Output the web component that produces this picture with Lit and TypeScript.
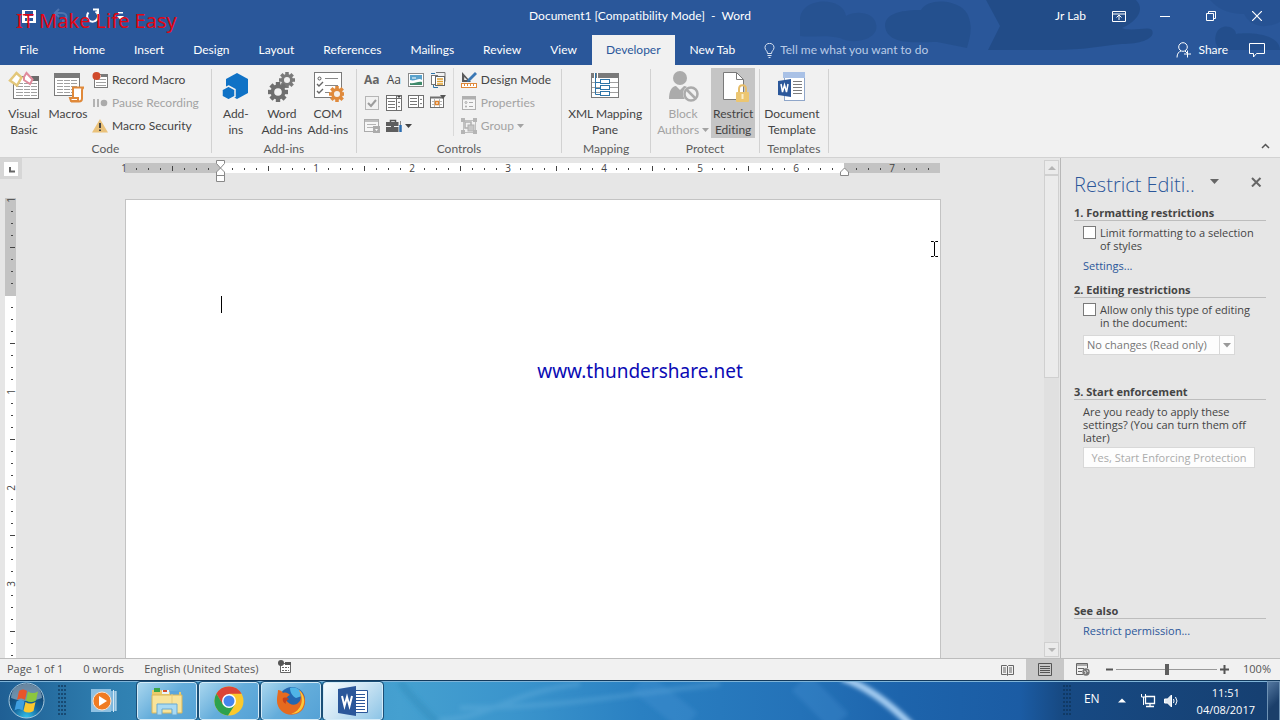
import { LitElement, html, svg, css } from "lit";
import { customElement, property } from "lit/decorators.js";
import { classMap } from "lit/directives/class-map.js";

const gear = (cx: number, cy: number, r: number, color: string, hole: string) => svg`
  <g fill=${color}>
    ${[0, 45, 90, 135].map(
      (a) => svg`<rect x=${cx - r * 0.22} y=${cy - r} width=${r * 0.44} height=${r * 2} transform=${`rotate(${a} ${cx} ${cy})`}/>`
    )}
    <circle cx=${cx} cy=${cy} r=${r * 0.74}/>
    <circle cx=${cx} cy=${cy} r=${r * 0.38} fill=${hole}/>
  </g>`;

const sheetLines = (x1: number, x2: number, ys: number[], color = "#a0a0a0") =>
  ys.map((y) => svg`<path d=${`M${x1} ${y}H${x2}`} stroke=${color}/>`);

const big = (body: unknown) => html`<svg class="ico32" width="32" height="32" viewBox="0 0 32 32" fill="none" aria-hidden="true">${body}</svg>`;
const small = (body: unknown) => html`<svg width="16" height="16" viewBox="0 0 16 16" fill="none" aria-hidden="true">${body}</svg>`;

const icons = {
  visualBasic: big(svg`
    <rect x="5.500" y="5.500" width="25" height="22" fill="#fff" stroke="#7a7a7a"/>
    <rect x="24" y="5" width="7" height="5" fill="#6b6b6b"/>
    ${sheetLines(8, 29, [12.5, 15.5, 18.5, 21.5, 24.5])}
    <path d="M15.500 11V27M22.500 11V27" stroke="#fff"/>
    <path d="M2 9.500L8.500 2l5 4.500-4.500 8z" fill="#fff" stroke="#e3c77a" stroke-width="2.500"/>
    <path d="M16 6l2.500-4 6 6.500-2.500 4.500-6-4z" fill="#fff" stroke="#e08a9c" stroke-width="2"/>`),
  macros: big(svg`
    <rect x="2.500" y="2.500" width="25" height="22" fill="#fff" stroke="#7a7a7a"/>
    <rect x="2" y="2" width="26" height="5" fill="#7a7a7a"/>
    ${sheetLines(5, 25, [9.5, 12.5, 15.5, 18.5, 21.5])}
    <path d="M11.500 9V23M18.500 9V23" stroke="#fff"/>
    <path d="M21 16.500h11c-2 0-2 2-2 3v8c0 2-1 3-3 3h-8c2 0 2-2 2-3z" fill="#fff" stroke="#e0893a" stroke-width="2"/>
    <path d="M18 27h8v3h-7z" fill="#fff" stroke="#e0893a" stroke-width="2"/>`),
  addins: big(svg`
    <path d="M17 2l11 6v14l-11 6-11-6V8z" fill="#0f72c6"/>
    <path d="M8.500 15l6.500 3.500v7L8.500 29 2 25.500v-7z" fill="#0f72c6" stroke="#f1f1f1" stroke-width="1.500"/>`),
  wordAddins: big(svg`${gear(21, 9, 8, "#7a7a7a", "#f1f1f1")}${gear(12, 21, 10, "#6f6f6f", "#f1f1f1")}`),
  comAddins: big(svg`
    <rect x="2.500" y="1.500" width="27" height="25" fill="#fff" stroke="#7a7a7a"/>
    <circle cx="7.500" cy="7.500" r="1.500" stroke="#555"/>
    <path d="M5 13l2 2 4-4M5 20l2 2 4-4" stroke="#666" stroke-width="1.400"/>
    <path d="M13 7.500h13M13 14.500h13M13 21.500h5" stroke="#888"/>
    ${gear(25, 23, 8, "#e08a3c", "#f6f1ec")}`),
  xml: big(svg`
    <rect x="2.500" y="2.500" width="27" height="24" fill="#fff" stroke="#7a7a7a"/>
    <rect x="2" y="2" width="28" height="5" fill="#7a7a7a"/>
    ${sheetLines(3, 29, [11.5, 16.5, 21.5])}
    <path d="M6.500 2v21.500h5M6.500 11.500h5M6.500 17.500h5" stroke="#2e75a8"/>
    <path d="M5.500 2v6M8.500 2v6" stroke="#fff"/>
    <rect x="11.500" y="8.500" width="9" height="4" fill="#fff" stroke="#2e75a8"/>
    <rect x="11.500" y="14.500" width="9" height="4" fill="#fff" stroke="#2e75a8"/>
    <rect x="11.500" y="20.500" width="9" height="4" fill="#fff" stroke="#2e75a8"/>`),
  block: big(svg`
    <circle cx="13" cy="7" r="7" fill="#ababab"/>
    <path d="M2 28c0-8 3-13 7-13l4 4 4-4c4 0 6 4 6 13z" fill="#ababab"/>
    <circle cx="24" cy="23" r="8" fill="#f1f1f1"/>
    <circle cx="24" cy="23" r="6.500" stroke="#ababab" stroke-width="2.500"/>
    <path d="M19.500 18.500l9 9" stroke="#ababab" stroke-width="2.500"/>`),
  restrict: big(svg`
    <path d="M6.500 1.500h13l7 7v20h-20z" fill="#fff" stroke="#7a7a7a"/>
    <path d="M19.500 1.500v7h7" stroke="#7a7a7a"/>
    <path d="M22 21v-3c0-5 7-5 7 0v3" stroke="#e6bd6a" stroke-width="2"/>
    <rect x="19" y="21" width="13" height="10" rx="1" fill="#ecc671"/>
    <path d="M25.500 23v5" stroke="#fbeecb" stroke-width="2"/>`),
  template: big(svg`
    <rect x="8.500" y="1.500" width="20" height="28" fill="#fff" stroke="#8fa6c9"/>
    <rect x="7" y="1" width="22" height="6" fill="#a9c1e6"/>
    ${sheetLines(17, 26, [10.5, 13.5, 16.5, 19.5, 22.5], "#7d7d7d")}
    <path d="M2 10l13-2v18L2 24z" fill="#2b579a"/>
    <path d="M5 13l1.500 8L8.500 14l2 7L12 13" stroke="#fff" stroke-width="1.500"/>`),
  record: small(svg`
    <rect x="2.500" y="2.500" width="13" height="13" fill="#fff" stroke="#7a7a7a"/>
    <rect x="9" y="2" width="7" height="3" fill="#7a7a7a"/>
    ${sheetLines(4, 14, [7.5, 10.5, 13.5])}
    <circle cx="4.500" cy="4" r="4" fill="#d0492b"/>`),
  pause: small(svg`<path d="M2 4v8M6 4v8" stroke="#b4b4b4" stroke-width="2"/><circle cx="12" cy="8" r="3.300" fill="#ababab"/>`),
  security: small(svg`<path d="M8 1l8 13.500H0z" fill="#eac27b"/><path d="M8 5v5M8 11.500v1.500" stroke="#444" stroke-width="2"/>`),
  picture: small(svg`
    <rect x=".5" y="1.500" width="15" height="13" fill="#fff" stroke="#8a8a8a"/>
    <path d="M2 3h12v5c-3-3-7 2-12 0z" fill="#5aa2cc"/><path d="M2 13v-2c4 1 8-2 12-1v3z" fill="#3f8a6b"/>
    <path d="M4 6h4" stroke="#fff"/>`),
  blocks: small(svg`
    <path d="M6 .500h9v9" stroke="#777"/>
    <rect x="1.500" y="3.500" width="6" height="9" fill="#fff" stroke="#777"/>
    <rect x="5.500" y="4.500" width="9" height="9" fill="#fff" stroke="#666"/>
    <path d="M7 7h6M7 9.500h6M7 12h6" stroke="#e0a030" stroke-width="1.500"/>
    <path d="M1 1.500h4M3.500 13v2.500H8" stroke="#2e75a8"/>`),
  check: small(svg`<rect x="1.500" y="1.500" width="13" height="13" stroke="#b5b5b5"/><path d="M4 8l3 3 5-6" stroke="#9c9c9c" stroke-width="2"/>`),
  combo: small(svg`
    <rect x=".5" y=".5" width="15" height="15" fill="#fff" stroke="#6f6f6f"/>
    <path d="M0 3.500h15M10.500 1v14" stroke="#6f6f6f"/><path d="M11 1h4l-2 2z" fill="#444"/>
    ${sheetLines(2, 9, [6.5, 9.5, 12.5], "#777")}<path d="M12 8l1-1.500L14 8zM12 11l1 1.500 1-1.500z" fill="#444"/>`),
  list: small(svg`
    <rect x=".5" y=".5" width="15" height="12" fill="#fff" stroke="#6f6f6f"/>
    <path d="M10.500 1v12" stroke="#6f6f6f"/>${sheetLines(2, 9, [3.5, 6.5, 9.5], "#777")}
    <path d="M12 5l1-1.500L14 5zM12 8l1 1.500L14 8z" fill="#444"/>`),
  date: small(svg`
    <rect x=".5" y="2.500" width="13" height="10" fill="#fff" stroke="#6f6f6f"/>
    <path d="M0 2.500h14" stroke="#6f6f6f" stroke-width="2"/>
    <path d="M2 6.500h10M2 9.500h10M4.500 4v8M9.500 4v8" stroke="#b5b5b5"/>
    <rect x="5.500" y="6.500" width="3" height="3" stroke="#e0832c" stroke-width="1.500"/>
    <path d="M10 0h6l-3 4z" fill="#555"/>`),
  repeat: small(svg`
    <rect x=".5" y="1.500" width="14" height="12" fill="#f6f6f6" stroke="#ababab"/>
    <path d="M0 3h15" stroke="#ababab" stroke-width="1.500"/>${sheetLines(3, 12, [6.5, 9.5], "#b5b5b5")}
    <rect x="9" y="8" width="7" height="7" fill="#ababab"/><path d="M11 11h3l-1.500 2z" fill="#fff"/>`),
  toolbox: small(svg`
    <path d="M4.500 4V2.500h5V4" stroke="#555" stroke-width="1.500"/>
    <rect x="0" y="4" width="13" height="10" fill="#5e5e5e"/><path d="M0 8.500h5M8 8.500h5" stroke="#f1f1f1"/>
    <path d="M14.500 4v10" stroke="#f1f1f1" stroke-width="4"/><path d="M14.500 3v4" stroke="#888"/><path d="M14.500 7v7" stroke="#2b6cb0" stroke-width="2.500"/>`),
  design: small(svg`
    <path d="M1 0v10h9z" fill="#5a5a5a"/><path d="M3.200 5v3h3z" fill="#f1f1f1"/>
    <path d="M6 10l1-3 7-7 2 2-7 7z" fill="#3a78b5"/>
    <rect x=".5" y="11.500" width="15" height="4" fill="#fff" stroke="#e0893a"/><path d="M3.500 12v2M6.500 12v2M9.500 12v2M12.500 12v2" stroke="#e0893a"/>`),
  props: small(svg`
    <rect x="1.500" y="1.500" width="13" height="13" fill="#f6f6f6" stroke="#b0b0b0"/>
    <path d="M1 3h14" stroke="#b0b0b0" stroke-width="3"/><circle cx="5" cy="7.500" r="1" stroke="#aaa"/><circle cx="5" cy="11.500" r="1" fill="#aaa"/>
    <path d="M8 7.500h4M8 11.500h4" stroke="#aaa"/>`),
  group: small(svg`
    <rect x="2.500" y="2.500" width="12" height="12" stroke="#c0c0c0"/>
    <rect x="4" y="4" width="6" height="6" stroke="#b0b0b0" stroke-width="1.500"/><rect x="7" y="7" width="6" height="6" fill="#c8c8c8" stroke="#b0b0b0"/>
    <path d="M0 0h4v4H0zM12 0h4v4h-4zM0 12h4v4H0zM12 12h4v4h-4z" fill="#b5b5b5"/>`),
};

const caret = html`<svg class="caret" width="7" height="4" viewBox="0 0 7 4" aria-hidden="true"><path d="M0 0h7L3.500 4z" fill="currentColor"/></svg>`;

const btnReset = css`
  button {
    font: inherit;
    color: inherit;
    background: none;
    border: 0;
    padding: 0;
    margin: 0;
  }
`;

@customElement("word-header")
class WordHeader extends LitElement {
  static styles = [
    btnReset,
    css`
      :host {
        display: block;
        position: relative;
        background: #2a579a;
        color: #fff;
        font: 12px/16px Lato, "Open Sans", sans-serif;
        font-variant-ligatures: none;
      }
      .art {
        position: absolute;
        right: 0;
        top: 0;
        opacity: 0.85;
      }
      .title-row {
        position: relative;
        display: grid;
        grid-template-columns: 1fr auto 1fr;
        align-items: center;
        height: 32px;
      }
      .quick {
        display: flex;
        align-items: center;
        gap: 16px;
        padding-left: 21px;
      }
      .quick button {
        display: flex;
      }
      .title {
        white-space: pre;
      }
      .window {
        display: flex;
        justify-content: flex-end;
        align-items: center;
      }
      .user {
        margin-right: 10px;
      }
      .window button {
        width: 46px;
        height: 30px;
        display: grid;
        place-items: center;
      }
      .tabs {
        position: relative;
        display: flex;
        align-items: stretch;
        gap: 1px;
        height: 30px;
        padding-top: 3px;
      }
      .tab {
        padding: 0 14px;
      }
      .file {
        width: 58px;
      }
      .active {
        background: #f1f1f1;
        color: #2a579a;
      }
      .tell {
        display: flex;
        align-items: center;
        gap: 5px;
        flex: 1;
        margin-left: 14px;
      }
      .tell input {
        flex: 1;
        font: inherit;
        color: #fff;
        background: none;
        border: 0;
        padding: 0;
        outline: 0;
      }
      .tell input::placeholder {
        color: #b9cbe6;
        opacity: 1;
      }
      .share {
        display: flex;
        align-items: center;
        gap: 6px;
        margin-right: 20px;
      }
      .comment {
        display: flex;
        align-items: center;
        margin-right: 14px;
      }
      .watermark {
        position: absolute;
        left: 16px;
        top: 7px;
        font: 20px/28px "Noto Sans", sans-serif;
        color: #e30613;
        white-space: nowrap;
      }
    `,
  ];
  render() {
    const tabs = ["Home", "Insert", "Design", "Layout", "References", "Mailings", "Review", "View", "Developer", "New Tab"];
    return html`
      <svg class="art" width="540" height="52" viewBox="0 0 540 52" aria-hidden="true">
        <g fill="#214b86">
          <path d="M60 20c0-24 44-24 46-4 10-6 28-4 30 8 4 14-20 22-36 14-16-4-28 0-40-2z" opacity=".5"/>
          <path d="M145 26c0-14 20-16 36-16 8-14 44-10 48 8 4 12 0 22-2 30l-30-6c-20 0-50 4-52-16z" opacity=".7"/>
          <path d="M246 0h150c10 10 0 22-14 28 10 4 26-2 30 2 4 8-10 14-30 14-20 2-40 6-66 6h-68l12-24z"/>
          <path d="M476 34c4-12 20-8 20 0 14-2 44 0 44 16h-60c-4-4-6-10-4-16z" opacity=".8"/>
          <path d="M470 0h70v22c-16 8-30 4-36-8-10 0-24-2-34-14z" opacity=".4"/>
        </g>
      </svg>
      <div class="title-row">
        <div class="quick">
          <button aria-label="Save">
            <svg width="16" height="16" viewBox="0 0 16 16"><path d="M1 2h14v13H1z" fill="#fff"/><path d="M4 3h8v5H4zM4 10h8v3H4z" fill="#2a579a"/><path d="M6 10h2v3H6z" fill="#fff"/></svg>
          </button>
          <button aria-label="Undo" disabled>
            <svg width="16" height="16" viewBox="0 0 16 16" fill="none" stroke="#4e74af" stroke-width="2"><path d="M6 1L2 5l4 4M2 5h7c6 0 6 8 0 8"/></svg>
          </button>
          <button aria-label="Repeat">
            <svg width="16" height="16" viewBox="0 0 16 16" fill="none" stroke="#fff" stroke-width="2"><path d="M3.500 4.500a5.500 5.500 0 1 0 7-1M8 1.500h5v5"/></svg>
          </button>
          <button aria-label="Customize Quick Access Toolbar">
            <svg width="7" height="8" viewBox="0 0 7 8"><path d="M1 0h5v1.500H1zM0 4h7L3.500 8z" fill="#fff"/></svg>
          </button>
        </div>
        <div class="title">Document1 [Compatibility Mode]  -  Word</div>
        <div class="window">
          <span class="user">Jr Lab</span>
          <button aria-label="Ribbon display options">
            <svg width="14" height="11" viewBox="0 0 14 11" fill="none" stroke="#fff"><path d="M.5.500h13v10H.5zM1 3h12M7 9V4.500M4.500 6.500L7 4l2.500 2.500"/></svg>
          </button>
          <button aria-label="Minimize"><svg width="10" height="10" viewBox="0 0 10 10"><path d="M0 5.500h10" stroke="#fff"/></svg></button>
          <button aria-label="Restore">
            <svg width="10" height="10" viewBox="0 0 10 10" fill="none" stroke="#fff"><path d="M.5 2.500h7v7h-7zM2.500 2.500v-2h7v7h-2"/></svg>
          </button>
          <button aria-label="Close"><svg width="10" height="10" viewBox="0 0 10 10"><path d="M0 0l10 10M10 0L0 10" stroke="#fff" stroke-width="1.200"/></svg></button>
        </div>
      </div>
      <nav class="tabs">
        <button class="tab file">File</button>
        ${tabs.map((t) => html`<button class=${classMap({ tab: true, active: t === "Developer" })}>${t}</button>`)}
        <label class="tell">
          <svg width="11" height="15" viewBox="0 0 11 15" fill="none" stroke="#dbe5f3" aria-hidden="true">
            <path d="M3.500 10.500c0-3-2.500-3-2.500-6 0-5.500 9-5.500 9 0 0 3-2.500 3-2.500 6zM3.500 12.500h4M4.500 14.500h2"/>
          </svg>
          <input aria-label="Tell me what you want to do" placeholder="Tell me what you want to do" />
        </label>
        <button class="share">
          <svg width="16" height="16" viewBox="0 0 16 16" fill="none" stroke="#fff" aria-hidden="true">
            <circle cx="7" cy="5" r="4.300"/><path d="M1 15.500c0-4 2-6 4-6.500M9 9l2 2M11.500 8.500v7M8 12h7"/>
          </svg>
          Share
        </button>
        <button class="comment" aria-label="Comments">
          <svg width="17" height="15" viewBox="0 0 17 15" fill="none" stroke="#fff"><path d="M.5.500h15v10H7.500L4.500 14v-3.500h-4z"/></svg>
        </button>
      </nav>
      <div class="watermark">IT Make Life Easy</div>
    `;
  }
}

@customElement("ribbon-group")
class RibbonGroup extends LitElement {
  @property() label = "";
  static styles = css`
    :host {
      display: flex;
      flex-direction: column;
      padding-right: 1px;
      background: linear-gradient(#d2d2d2, #d2d2d2) right 1px / 1px 84px no-repeat;
    }
    .body {
      display: flex;
      height: 73px;
    }
    .label {
      text-align: center;
      line-height: 16px;
      color: #5c5c5c;
    }
  `;
  render() {
    return html`<div class="body"><slot></slot></div><div class="label">${this.label}</div>`;
  }
}

@customElement("word-ribbon")
class WordRibbon extends LitElement {
  static styles = [
    btnReset,
    css`
      :host {
        display: flex;
        position: relative;
        background: #f1f1f1;
        border-bottom: 1px solid #d2d2d2;
        padding-top: 3px;
        font: 12px/16px Lato, "Open Sans", sans-serif;
        font-variant-ligatures: none;
        color: #444;
      }
      .big {
        display: flex;
        flex-direction: column;
        align-items: center;
        gap: 3px;
        height: 70px;
        padding-top: 3px;
        white-space: nowrap;
      }
      .big svg.ico32 {
        flex: none;
      }
      .w44 {
        width: 44px;
      }
      .w48 {
        width: 48px;
      }
      .w56 {
        width: 56px;
      }
      .thin {
        width: 2px;
      }
      .edge {
        width: 4px;
      }
      .mid {
        width: 6px;
      }
      .wide {
        width: 8px;
      }
      .on {
        background: #c5c5c5;
      }
      .caret {
        margin-left: 3px;
        vertical-align: 2px;
      }
      .rows {
        display: grid;
        grid-template-rows: repeat(3, 23px);
        align-content: start;
      }
      .row {
        display: flex;
        align-items: center;
        gap: 4px;
        padding-right: 10px;
        white-space: nowrap;
      }
      button:disabled {
        color: #a3a3a3;
      }
      .palette {
        display: grid;
        grid-template: repeat(3, 23px) / repeat(4, 22px);
        place-items: center;
        padding: 0 4px;
        margin-right: 7px;
        border-right: 1px solid #d9d9d9;
        height: 68px;
      }
      .palette button {
        display: flex;
        align-items: center;
      }
      .aa {
        font-family: "Open Sans", sans-serif;
      }
      .strong {
        font-weight: 700;
        color: #666;
      }
      .tools {
        grid-column: span 2;
        justify-self: start;
        padding-left: 3px;
      }
      .collapse {
        margin-left: auto;
        align-self: flex-end;
        padding: 4px 10px 4px 4px;
      }
    `,
  ];
  big(icon: unknown, a: string, b: unknown, cls = "", disabled = false) {
    return html`<button class="big ${cls}" ?disabled=${disabled}>${icon}<span>${a}<br />${b}</span></button>`;
  }
  row(icon: unknown, text: string, disabled = false, menu = false) {
    return html`<button class="row" ?disabled=${disabled}>${icon}<span>${text}${menu ? caret : ""}</span></button>`;
  }
  render() {
    const p = (label: string, icon: unknown, disabled = false) => html`<button aria-label=${label} ?disabled=${disabled}>${icon}</button>`;
    return html`
      <ribbon-group label="Code">
        <div class="thin"></div>
        ${this.big(icons.visualBasic, "Visual", "Basic", "w44")} ${this.big(icons.macros, "Macros", "", "w44")}
        <div class="thin"></div>
        <div class="rows">
          ${this.row(icons.record, "Record Macro")} ${this.row(icons.pause, "Pause Recording", true)}
          ${this.row(icons.security, "Macro Security")}
        </div>
        <div class="thin"></div>
      </ribbon-group>
      <ribbon-group label="Add-ins">
        ${this.big(icons.addins, "Add-", "ins", "w48")} ${this.big(icons.wordAddins, "Word", "Add-ins", "w44")}
        ${this.big(icons.comAddins, "COM", "Add-ins", "w48")}
        <div class="edge"></div>
      </ribbon-group>
      <ribbon-group label="Controls">
        <div class="palette">
          <button class="aa strong" aria-label="Rich text control">Aa</button>
          <button class="aa" aria-label="Plain text control">Aa</button>
          ${p("Picture control", icons.picture)} ${p("Building block gallery", icons.blocks)}
          ${p("Check box control", icons.check, true)} ${p("Combo box control", icons.combo)}
          ${p("Drop-down list control", icons.list)} ${p("Date picker control", icons.date)}
          ${p("Repeating section", icons.repeat, true)}
          <button class="tools" aria-label="Legacy tools">${icons.toolbox}${caret}</button>
        </div>
        <div class="rows">
          ${this.row(icons.design, "Design Mode")} ${this.row(icons.props, "Properties", true)}
          ${this.row(icons.group, "Group", true, true)}
        </div>
      </ribbon-group>
      <ribbon-group label="Mapping">
        <div class="mid"></div>
        ${this.big(icons.xml, "XML Mapping", "Pane")}
        <div class="wide"></div>
      </ribbon-group>
      <ribbon-group label="Protect">
        <div class="edge"></div>
        ${this.big(icons.block, "Block", html`Authors${caret}`, "w56", true)} ${this.big(icons.restrict, "Restrict", "Editing", "w44 on")}
        <div class="edge"></div>
      </ribbon-group>
      <ribbon-group label="Templates">
        <div class="edge"></div>
        ${this.big(icons.template, "Document", "Template")}
        <div class="wide"></div>
      </ribbon-group>
      <button class="collapse" aria-label="Collapse the ribbon">
        <svg width="9" height="6" viewBox="0 0 9 6" fill="none"><path d="M1 5l3.500-3.500L8 5" stroke="#555" stroke-width="1.500"/></svg>
      </button>
    `;
  }
}

@customElement("word-editor")
class WordEditor extends LitElement {
  static styles = [
    btnReset,
    css`
      :host {
        display: flex;
        min-width: 0;
        background: #e6e6e6;
      }
      .side {
        width: 22px;
        flex: none;
        overflow: hidden;
        display: flex;
        flex-direction: column;
      }
      .corner {
        flex: none;
        height: 21px;
        display: grid;
        place-items: center;
        background: #d6d6d6;
        margin-bottom: 19px;
      }
      .vruler {
        flex: none;
        margin-left: 5px;
        display: block;
        overflow: visible;
      }
      .canvas {
        flex: 1;
        min-width: 0;
        display: flex;
        flex-direction: column;
        align-items: center;
        overflow: hidden;
      }
      .hruler {
        flex: none;
        margin: 1px 0 16px;
        overflow: visible;
      }
      svg text {
        font: 10px "Open Sans", sans-serif;
        fill: #444;
        text-anchor: middle;
      }
      .page {
        box-sizing: border-box;
        flex: 1;
        width: 816px;
        background: #fff;
        border: 1px solid #c3c3c3;
        border-bottom: 0;
        padding: 96px 95px 0;
      }
      .insertion {
        width: 1px;
        height: 17px;
        background: #000;
      }
      .scroll {
        box-sizing: border-box;
        width: 15px;
        flex: none;
        margin: 2px 1px 1px 0;
        display: flex;
        flex-direction: column;
        background: #e0e0e0;
      }
      .scroll button,
      .thumb {
        box-sizing: border-box;
        border: 1px solid #d0d0d0;
        background: #ebebeb;
      }
      .scroll button {
        height: 15px;
        display: grid;
        place-items: center;
      }
      .thumb {
        height: 203px;
        margin-bottom: auto;
      }
    `,
  ];
  ticks(from: number, to: number, draw: (pos: number, i: number) => unknown) {
    const out: unknown[] = [];
    for (let i = from; i <= to; i++) out.push(draw(i * 12, i));
    return out;
  }
  render() {
    return html`
      <div class="side">
        <div class="corner">
          <svg width="14" height="14" viewBox="0 0 14 14"><path d="M0 0h14v14H0z" fill="#fff"/><path d="M6 5v4.500h5" fill="none" stroke="#666" stroke-width="2"/></svg>
        </div>
        <svg class="vruler" width="11" height="864" viewBox="0 -98 11 864" aria-hidden="true">
          <path d="M0-98h11V0H0z" fill="#c3c3c3"/><path d="M0 0h11v766H0z" fill="#fff"/>
          ${this.ticks(-8, 62, (y, i) =>
            i === 0 ? "" : i % 8 === 0
              ? svg`<text transform=${`translate(10 ${y}) rotate(-90)`}>${Math.abs(i / 8)}</text>`
              : svg`<path d=${i % 4 === 0 ? `M5 ${y - 0.5}h5` : `M6 ${y - 0.5}h2`} stroke="#444"/>`
          )}
        </svg>
      </div>
      <div class="canvas">
        <svg class="hruler" width="816" height="24" viewBox="-96 0 816 24" aria-hidden="true">
          <path d="M-96 4H719v10H-96z" fill="#c3c3c3"/><path d="M0 4h623v10H0z" fill="#fff"/>
          ${this.ticks(-8, 59, (x, i) =>
            i === 0 || i === 52 ? "" : i % 8 === 0
              ? svg`<text x=${x - 1} y="13">${Math.abs(i / 8)}</text>`
              : svg`<path d=${i % 4 === 0 ? `M${x - 0.5} 7v5` : `M${x - 0.5} 9v2`} stroke="#444"/>`
          )}
          <g fill="#fff" stroke="#888">
            <path d="M-4.500 1.500h8v3L-.5 9l-4-4.500zM-.5 9l4 4v9.500h-8V13zM-4.500 16.500h8"/>
            <path d="M623.500 9l4 4v3.500h-8V13z"/>
          </g>
        </svg>
        <div class="page"><div class="insertion"></div></div>
      </div>
      <div class="scroll">
        <button aria-label="Scroll up"><svg width="8" height="4" viewBox="0 0 8 4"><path d="M0 4h8L4 0z" fill="#b5b5b5"/></svg></button>
        <div class="thumb"></div>
        <button aria-label="Scroll down"><svg width="8" height="4" viewBox="0 0 8 4"><path d="M0 0h8L4 4z" fill="#b5b5b5"/></svg></button>
      </div>
    `;
  }
}

@customElement("restrict-pane")
class RestrictPane extends LitElement {
  static styles = [
    btnReset,
    css`
      :host {
        box-sizing: border-box;
        display: flex;
        flex-direction: column;
        width: 220px;
        flex: none;
        background: #e6e6e6;
        border-left: 1px solid #b8b8b8;
        padding: 0 14px 21px 13px;
        font: 11px/13px "Open Sans", sans-serif;
        color: #444;
      }
      header {
        display: flex;
        align-items: center;
        height: 47px;
      }
      h1 {
        flex: 1;
        margin: 0;
        padding-top: 6px;
        font: 300 20px/28px "Open Sans", sans-serif;
        color: #2b579a;
      }
      header button {
        display: flex;
      }
      .close {
        margin: 0 4px 0 32px;
      }
      h2 {
        margin: 0;
        font: 700 11px/15px "Open Sans", sans-serif;
        border-bottom: 1px solid #bdbdbd;
      }
      .sec {
        padding: 5px 0 0 9px;
      }
      .first {
        margin-bottom: 10px;
      }
      .second {
        margin-bottom: 29px;
      }
      .option {
        display: grid;
        grid-template-columns: 13px 1fr;
        column-gap: 4px;
        padding-right: 8px;
      }
      .option input {
        appearance: none;
        box-sizing: border-box;
        width: 13px;
        height: 13px;
        margin: 0;
        background: #fff;
        border: 1px solid #7a7a7a;
      }
      a {
        display: block;
        width: max-content;
        color: #2b579a;
        text-decoration: none;
      }
      .settings {
        margin-top: 7px;
      }
      .pick {
        display: grid;
        width: 152px;
        margin-top: 6px;
      }
      .pick > * {
        grid-area: 1 / 1;
      }
      .pick svg {
        justify-self: end;
      }
      select {
        appearance: none;
        box-sizing: border-box;
        height: 20px;
        padding: 0 18px 0 3px;
        margin: 0;
        font: inherit;
        line-height: 16px;
        color: #777;
        opacity: 1;
        background: #fdfdfd;
        border: 1px solid #d8d8d8;
        border-radius: 0;
      }
      p {
        margin: 0;
      }
      .enforce {
        box-sizing: border-box;
        width: 172px;
        height: 21px;
        margin-top: 3px;
        background: #fdfdfd;
        border: 1px solid #d8d8d8;
        color: #ababab;
        white-space: nowrap;
      }
      .also {
        margin-top: auto;
      }
    `,
  ];
  render() {
    return html`
      <header>
        <h1>Restrict Editi..</h1>
        <button aria-label="Task pane options"><svg width="9" height="5" viewBox="0 0 9 5"><path d="M0 0h9L4.500 5z" fill="#666"/></svg></button>
        <button class="close" aria-label="Close"><svg width="11" height="10" viewBox="0 0 11 10"><path d="M1 1l8.500 8.500M9.500 1L1 9.500" stroke="#666" stroke-width="2"/></svg></button>
      </header>
      <h2>1. Formatting restrictions</h2>
      <div class="sec first">
        <label class="option"><input type="checkbox" /><span>Limit formatting to a selection of styles</span></label>
        <a class="settings" href="#">Settings...</a>
      </div>
      <h2>2. Editing restrictions</h2>
      <div class="sec second">
        <label class="option"><input type="checkbox" /><span>Allow only this type of editing in the document:</span></label>
        <div class="pick">
          <select aria-label="Type of editing allowed" disabled><option>No changes (Read only)</option></select>
          <svg width="16" height="20" viewBox="0 0 16 20" aria-hidden="true"><path d="M.5 1v18" stroke="#d8d8d8"/><path d="M4 8h8l-4 4.500z" fill="#999"/></svg>
        </div>
      </div>
      <h2>3. Start enforcement</h2>
      <div class="sec">
        <p>Are you ready to apply these settings? (You can turn them off later)</p>
        <button class="enforce" disabled>Yes, Start Enforcing Protection</button>
      </div>
      <h2 class="also">See also</h2>
      <div class="sec"><a href="#">Restrict permission...</a></div>
    `;
  }
}

@customElement("word-status")
class WordStatus extends LitElement {
  static styles = [
    btnReset,
    css`
      :host {
        box-sizing: border-box;
        display: flex;
        align-items: center;
        height: 22px;
        flex: none;
        background: #f1f1f1;
        border-top: 1px solid #bcbcbc;
        padding: 0 9px 0 7px;
        font: 11px/16px "Open Sans", sans-serif;
        color: #555;
      }
      .left,
      .percent {
        padding-bottom: 2px;
      }
      .left {
        display: flex;
        align-items: center;
        gap: 20px;
        flex: 1;
      }
      .view {
        width: 38px;
        height: 21px;
        display: grid;
        place-items: center;
      }
      .on {
        background: #c8c8c8;
      }
      .zoom {
        display: flex;
        align-items: center;
        gap: 3px;
        margin: 0 14px 0 4px;
      }
      .zoom button {
        display: flex;
      }
      input {
        appearance: none;
        width: 101px;
        height: 12px;
        margin: 0;
        background: linear-gradient(#999, #999) center / 100% 1px no-repeat;
      }
      input::-webkit-slider-thumb {
        appearance: none;
        width: 4px;
        height: 11px;
        background: #5e5e5e;
      }
    `,
  ];
  render() {
    return html`
      <div class="left">
        <span>Page 1 of 1</span><span>0 words</span><span>English (United States)</span>
        <button aria-label="Macro recording">
          <svg width="13" height="13" viewBox="0 0 13 13" fill="none"><path d="M2.500 3.500h10v9h-10z" fill="#fff" stroke="#666"/><path d="M7 3.500h6" stroke="#555" stroke-width="3"/><path d="M4 7.500h7M4 10.500h7" stroke="#666" stroke-dasharray="2 1"/><circle cx="3" cy="3" r="3" fill="#555"/></svg>
        </button>
      </div>
      <button class="view" aria-label="Read mode">
        <svg width="13" height="12" viewBox="0 0 13 12" fill="none" stroke="#666"><path d="M.5 1.500h5l1 1 1-1h5v9h-5l-1 1-1-1h-5zM6.500 2v9M2 4h3M2 6h3M2 8h3M8 4h3M8 6h3M8 8h3"/></svg>
      </button>
      <button class="view on" aria-label="Print layout">
        <svg width="14" height="13" viewBox="0 0 14 13" fill="none" stroke="#555"><path d="M.5.500h13v12H.5zM2 3.500h10M2 5.500h10M2 7.500h10M2 9.500h10"/></svg>
      </button>
      <button class="view" aria-label="Web layout">
        <svg width="14" height="13" viewBox="0 0 14 13" fill="none" stroke="#666"><path d="M7 11.500H.5V.500h11V5M0 2h12M2 5.500h6M2 8.500h4"/><circle cx="10" cy="9" r="3.700" fill="#777" stroke="none"/><path d="M8 8l2 1-1 2M11 7l1 2" stroke="#ddd"/></svg>
      </button>
      <div class="zoom">
        <button aria-label="Zoom out"><svg width="7" height="9" viewBox="0 0 7 9"><path d="M0 4.500h7" stroke="#555" stroke-width="2"/></svg></button>
        <input type="range" min="0" max="100" value="50" aria-label="Zoom" />
        <button aria-label="Zoom in"><svg width="9" height="9" viewBox="0 0 9 9"><path d="M0 4.500h9M4.500 0v9" stroke="#555" stroke-width="2"/></svg></button>
      </div>
      <span class="percent">100%</span>
    `;
  }
}

@customElement("task-bar")
class TaskBar extends LitElement {
  static styles = [
    btnReset,
    css`
      :host {
        box-sizing: border-box;
        display: flex;
        align-items: center;
        position: relative;
        height: 40px;
        flex: none;
        border-top: 1px solid #12395c;
        background: linear-gradient(90deg, #1f5f94 0, #2f7fb0 110px, #3a92c4 260px, #45a0d0 400px, #3a94cc 520px, #2a80c2 640px, #2472b8 800px, #1d64ac 900px, #1b5ca4 1020px, #174a84 1060px, #163f70 1280px);
        box-shadow: inset 0 1px #7fb4d8;
        color: #fff;
        font: 11px/17px "Open Sans", sans-serif;
        overflow: hidden;
      }
      .sheen {
        position: absolute;
        left: 380px;
        top: 1px;
      }
      .orb {
        position: relative;
        display: flex;
        margin-left: 8px;
      }
      .grip {
        width: 9px;
        height: 31px;
        margin-left: 13px;
        background: radial-gradient(circle at 1px 1px, #0c2f5299 1px, transparent 1px) 0 0 / 3px 4px;
      }
      .media {
        display: flex;
        margin: 0 20px 0 24px;
      }
      .apps {
        display: flex;
        gap: 2px;
      }
      .app {
        box-sizing: border-box;
        width: 60px;
        height: 38px;
        display: grid;
        place-items: center;
        border: 1px solid #d3ebf8;
        border-radius: 3px;
        outline: 1px solid #1b4f77;
        outline-offset: 0;
        background: linear-gradient(135deg, #a9d6ee, #64addb 50%, #55a2d6);
      }
      .current {
        background: linear-gradient(135deg, #f4fafd, #cfe6f4 45%, #8cc4e6);
      }
      .tray {
        position: relative;
        display: flex;
        align-items: center;
        align-self: stretch;
        margin-left: auto;
      }
      .lang {
        margin: 0 18px 5px 12px;
        font-size: 12px;
      }
      .tray button {
        display: flex;
      }
      .up {
        margin-right: 14px;
      }
      .net {
        margin-right: 8px;
      }
      .clock {
        text-align: center;
        margin: 0 12px 0 18px;
      }
      .desktop {
        align-self: stretch;
        width: 13px;
        border: 1px solid #6f93b5;
        border-bottom: 0;
        background: linear-gradient(135deg, #5478a0, #1b3f6a 60%);
      }
    `,
  ];
  render() {
    return html`
      <svg class="sheen" width="560" height="40" viewBox="0 0 560 40" aria-hidden="true">
        <defs><filter id="soft"><feGaussianBlur stdDeviation="2"/></filter></defs>
        <g filter="url(#soft)" fill="none">
          <path d="M20 0c10 14 24 28 36 40" stroke="#2f8dbd" stroke-width="8" opacity=".5"/>
          <path d="M60 38C110 36 130 10 200 2M80 26c100 0 150-12 260-24" stroke="#7cc0e8" stroke-width="5" opacity=".25"/>
          <path d="M260 0l50 40M420 0l40 40" stroke="#4f9bdc" stroke-width="24" opacity=".25"/>
          <path d="M462-4c24 8 46 24 70 48" stroke="#a5cdf2" stroke-width="7"/>
        </g>
      </svg>
      <button class="orb" aria-label="Start">
        <svg width="37" height="37" viewBox="0 0 37 37">
          <defs>
            <radialGradient id="orb" cx=".5" cy="1" r=".9"><stop offset="0" stop-color="#35c6ee"/><stop offset=".45" stop-color="#14639b"/><stop offset="1" stop-color="#123c64"/></radialGradient>
          </defs>
          <circle cx="18.500" cy="18.500" r="17.500" fill="url(#orb)" stroke="#a6c7dc"/>
          <path d="M3 16C3-3 34-3 34 16c-10 4-21 4-31 0z" fill="#d5e4ee" opacity=".45"/>
          <path d="M11 9c3-2 5-2 8 0l-2 9c-3-2-5-2-8 0z" fill="#e8562a"/>
          <path d="M20 9.500c3 2 6 2 10 0l-2 9c-4 2-7 2-10 0z" fill="#8cc63e"/>
          <path d="M8.500 19.500c3-2 5-2 8 0l-2 9c-3-2-5-2-8 0z" fill="#3f9fe0"/>
          <path d="M17.500 20c3 2 6 2 10 0l-2 9c-4 2-7 2-10 0z" fill="#fbc72e"/>
        </svg>
      </button>
      <span class="grip"></span>
      <button class="media" aria-label="Media Player">
        <svg width="26" height="24" viewBox="0 0 26 24"><path d="M19 2h6v20h-6z" fill="#7db6dc"/><path d="M22.500 1v22M25 2v20" stroke="#d6eaf6"/><path d="M0 0h20v23H0z" fill="#8fc1e2"/><circle cx="11" cy="12" r="9" fill="#f07b22" stroke="#fbe3cf"/><path d="M8 7l8 5-8 5z" fill="#fff"/></svg>
      </button>
      <div class="apps">
        <button class="app" aria-label="Explorer">
          <svg width="34" height="30" viewBox="0 0 34 30"><path d="M2 4h9l2 2h18v21H2z" fill="#eccb6a"/><path d="M4 2h6v4H4z" fill="#3aa648"/><path d="M12 4h7v4h-7z" fill="#e9f3fa"/><path d="M20 5h9v4h-9z" fill="#5aa6dc"/><path d="M13 4h4v2h-4z" fill="#d4502c"/><path d="M2 9h30v18H2z" fill="#f8e49b" stroke="#d9b65a"/><path d="M22 8v19" stroke="#e7cd7c"/><path d="M7 18h20v11h-5v-6H12v6H7z" fill="#a9daf3" stroke="#68a9d2"/></svg>
        </button>
        <button class="app" aria-label="Chrome">
          <svg width="30" height="30" viewBox="0 0 30 30"><circle cx="15" cy="15" r="14.500" fill="#fbc92c"/><path d="M2.400 7.750A14.500 14.500 0 0 1 27.600 7.750H15L8.700 18.600z" fill="#dc4437"/><path d="M2.400 7.750A14.500 14.500 0 0 0 14 29.500L21 18.600 9 18.600z" fill="#2da14f"/><circle cx="15" cy="15" r="7" fill="#fff"/><circle cx="15" cy="15" r="5.500" fill="#4585ee"/></svg>
        </button>
        <button class="app" aria-label="Firefox">
          <svg width="30" height="30" viewBox="0 0 30 30"><circle cx="16" cy="14" r="13" fill="#2467b0"/><path d="M14 2c8-2 12 4 12 8l-6 2c-4-2-6-6-6-10z" fill="#4fb4e6"/><path d="M2 4c2 0 4 1 5 3 3-1 5 0 7 2-3 1-3 3-4 5 3 5 9 6 12 3 4-3 3-9 1-13 8 5 8 17 1 22C14 33 0 26 1 13c0-3 1-6 1-9z" fill="#e66a1f"/><path d="M23 4c6 5 7 14 2 20-3 3-7 4-10 4 10-3 14-14 8-24z" fill="#fbc93a"/><path d="M7 12c3-1 5 0 6 1-2 1-4 3-3 5-2-1-4-3-3-6z" fill="#c5411b"/></svg>
        </button>
        <button class="app current" aria-label="Word">
          <svg width="30" height="30" viewBox="0 0 30 30"><path d="M14.500 4.500h15v22h-15z" fill="#fff" stroke="#2b579a"/><path d="M18 8.500h9M18 11.500h9M18 14.500h9M18 17.500h9M18 20.500h9M18 23.500h9" stroke="#2b579a"/><path d="M0 3l18-3v30L0 27z" fill="#2b579a"/><path d="M4 10l2.500 10L9 11l2.500 9L14 10" fill="none" stroke="#fff" stroke-width="2"/></svg>
        </button>
      </div>
      <div class="tray">
        <span class="grip"></span>
        <span class="lang">EN</span>
        <button class="up" aria-label="Show hidden icons"><svg width="8" height="5" viewBox="0 0 8 5"><path d="M0 4.500h8L4 .500z" fill="#fff"/></svg></button>
        <button class="net" aria-label="Network">
          <svg width="16" height="15" viewBox="0 0 16 15" fill="none" stroke="#fff"><path d="M5.500 3.500h9v7h-9zM10 11v2.500M6 13.500h8" stroke-width="1.300"/><path d="M1.500 1v3h4V1M3.500 4v8"/></svg>
        </button>
        <button aria-label="Volume">
          <svg width="15" height="14" viewBox="0 0 15 14" fill="none" stroke="#fff"><path d="M.5 5h3l4-4v12l-4-4h-3z" fill="#dfe8f0"/><path d="M9.500 5q1 2 0 4M11.500 3q3 4 0 8" /></svg>
        </button>
        <div class="clock">11:51<br />04/08/2017</div>
        <button class="desktop" aria-label="Show desktop"></button>
      </div>
    `;
  }
}

@customElement("app-root")
class AppRoot extends LitElement {
  static styles = css`
    :host {
      display: flex;
      flex-direction: column;
      position: relative;
      height: 100vh;
      overflow: hidden;
    }
    .work {
      flex: 1;
      min-height: 0;
      display: flex;
    }
    word-editor {
      flex: 1;
    }
    .site {
      position: absolute;
      left: 0;
      right: 0;
      top: 357px;
      text-align: center;
      font: 19px/28px "Noto Sans", sans-serif;
      color: #0a0ab4;
      pointer-events: none;
    }
    .pointer {
      position: absolute;
      left: 930px;
      top: 241px;
    }
  `;
  render() {
    return html`
      <word-header></word-header>
      <word-ribbon></word-ribbon>
      <div class="work">
        <word-editor></word-editor>
        <restrict-pane></restrict-pane>
      </div>
      <word-status></word-status>
      <task-bar></task-bar>
      <div class="site">www.thundershare.net</div>
      <svg class="pointer" width="8" height="16" viewBox="0 0 8 16" fill="none" aria-hidden="true"><path d="M1 .500h2.500l1 1 1-1H8M1 15.500h2.500l1-1 1 1H8M4.500 1v14" stroke="#000"/></svg>
    `;
  }
}
